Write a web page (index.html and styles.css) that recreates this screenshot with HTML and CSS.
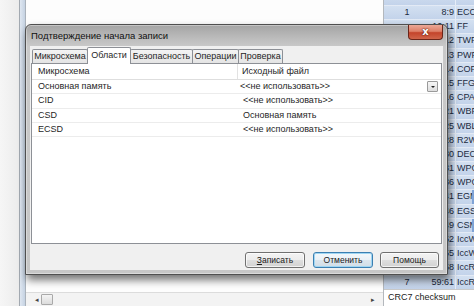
FILE: index.html
```html
<!DOCTYPE html>
<html lang="ru">
<head>
<meta charset="utf-8">
<title>Подтверждение начала записи</title>
<link rel="stylesheet" href="styles.css">
</head>
<body>
<div class="app">
  <div class="side"></div>
  <div class="split"></div>
  <div class="main">
    <div class="canvas"></div>
    <div class="hscroll">
      <span class="arrow">◂</span>
      <span class="thumb"></span>
      <span class="spacer"></span>
      <span class="arrow">▸</span>
    </div>
  </div>
  <div class="right">
    <div class="grid">
      <div class="row head"><span class="c1"></span><span class="c2"></span><span class="c3"></span><span class="c4"></span></div>
      <div class="row"><span class="c1">1</span><span class="c2">8:9</span><span class="c3">ECC</span><span class="c4"></span></div>
      <div class="row"><span class="c1"></span><span class="c2">10:11</span><span class="c3">FF</span><span class="c4"></span></div>
      <div class="row"><span class="c1"></span><span class="c2">12</span><span class="c3">TWP</span><span class="c4"></span></div>
      <div class="row"><span class="c1"></span><span class="c2">13</span><span class="c3">PWP</span><span class="c4"></span></div>
      <div class="row"><span class="c1"></span><span class="c2">14</span><span class="c3">COPY</span><span class="c4"></span></div>
      <div class="row"><span class="c1"></span><span class="c2">15</span><span class="c3">FFG</span><span class="c4"></span></div>
      <div class="row"><span class="c1"></span><span class="c2">16</span><span class="c3">CPA</span><span class="c4"></span></div>
      <div class="row"><span class="c1"></span><span class="c2">21</span><span class="c3">WBP</span><span class="c4"></span></div>
      <div class="row"><span class="c1"></span><span class="c2">22:25</span><span class="c3">WBL</span><span class="c4"></span></div>
      <div class="row"><span class="c1"></span><span class="c2">26:28</span><span class="c3">R2W</span><span class="c4"></span></div>
      <div class="row"><span class="c1"></span><span class="c2">29:30</span><span class="c3">DECC</span><span class="c4"></span></div>
      <div class="row"><span class="c1"></span><span class="c2">31</span><span class="c3">WPGE</span><span class="c4"></span></div>
      <div class="row"><span class="c1"></span><span class="c2">32:36</span><span class="c3">WPGS</span><span class="c4"></span></div>
      <div class="row"><span class="c1"></span><span class="c2">37:41</span><span class="c3">EGM</span><span class="c4 mark"></span></div>
      <div class="row"><span class="c1"></span><span class="c2">42:46</span><span class="c3">EGS</span><span class="c4"></span></div>
      <div class="row"><span class="c1"></span><span class="c2">47:49</span><span class="c3">CSM</span><span class="c4 mark"></span></div>
      <div class="row"><span class="c1"></span><span class="c2">50:52</span><span class="c3">IccW</span><span class="c4"></span></div>
      <div class="row"><span class="c1"></span><span class="c2">53:55</span><span class="c3">IccW</span><span class="c4"></span></div>
      <div class="row"><span class="c1"></span><span class="c2">56:58</span><span class="c3">IccR</span><span class="c4"></span></div>
      <div class="row"><span class="c1">7</span><span class="c2">59:61</span><span class="c3">IccR</span><span class="c4"></span></div>
    </div>
    <div class="desc">CRC7 checksum</div>
  </div>
</div>

<div class="dialog">
  <div class="titlebar">
    <span class="title">Подтверждение начала записи</span>
    <span class="close">x</span>
  </div>
  <div class="client">
    <div class="tabs">
      <span class="tab t1">Микросхема</span>
      <span class="tab t2 sel">Области</span>
      <span class="tab t3">Безопасность</span>
      <span class="tab t4">Операции</span>
      <span class="tab t5">Проверка</span>
    </div>
    <div class="panel">
      <div class="lrow lhead"><span class="lc1">Микросхема</span><span class="lc2">Исходный файл</span></div>
      <div class="lrow combo"><span class="lc1">Основная память</span><span class="lc2">&lt;&lt;не использовать&gt;&gt;<span class="drop"></span></span></div>
      <div class="lrow"><span class="lc1">CID</span><span class="lc2">&lt;&lt;не использовать&gt;&gt;</span></div>
      <div class="lrow"><span class="lc1">CSD</span><span class="lc2">Основная память</span></div>
      <div class="lrow"><span class="lc1">ECSD</span><span class="lc2">&lt;&lt;не использовать&gt;&gt;</span></div>
    </div>
    <div class="buttons">
      <span class="btn"><u>З</u>аписать</span>
      <span class="btn focus">Отменить</span>
      <span class="btn">Помощь</span>
    </div>
  </div>
</div>
</body>
</html>
```

FILE: styles.css
```css
html, body {
  margin: 0;
  padding: 0;
}
body {
  width: 474px;
  height: 306px;
  overflow: hidden;
  position: relative;
  font-family: "Liberation Sans", Arial, sans-serif;
  font-size: 9px;
  color: #1f1f1f;
  background: #fff;
}

/* background application */
.app {
  display: flex;
  height: 306px;
}
.side {
  width: 19px;
  background: linear-gradient(90deg, #f6f6f6, #ececec);
  border-right: 1px solid #a2a9b1;
}
.split {
  width: 5px;
  background: linear-gradient(90deg, #dfe7f1, #c5d2e2);
  border-right: 1px solid #aab2bb;
}
.main {
  flex: 1;
  display: flex;
  flex-direction: column;
  background: #fff;
}
.canvas {
  flex: 1;
  background: #fdfdfd;
}
.hscroll {
  height: 13px;
  border-top: 1px solid #dcdcdc;
  background: #f3f3f3;
  display: flex;
  align-items: center;
  padding: 0 8px 0 9px;
  color: #444;
  font-size: 7px;
}
.hscroll .thumb {
  width: 10px;
  height: 9px;
  margin-left: 2px;
  border: 1px solid #a9a9a9;
  border-radius: 1px;
  background: linear-gradient(#f4f4f4, #dcdcdc);
}
.hscroll .spacer {
  flex: 1;
}
.right {
  width: 90px;
  border-left: 1px solid #b4b8bd;
  display: flex;
  flex-direction: column;
  background: #fff;
}
.grid {
  flex: 1;
  overflow: hidden;
  background: #c9d8ec;
}
.row {
  display: grid;
  grid-template-columns: 46px 26px 16px 1fr;
  height: 14.2px;
  line-height: 13px;
  box-sizing: border-box;
  border-bottom: 1px solid #e3eaf5;
  background: linear-gradient(#d3e0f1, #c3d3ea);
  color: #1b2a3d;
  white-space: nowrap;
}
.row.head {
  margin-top: -8.2px;
}
.c1 {
  text-align: center;
}
.c2 {
  text-align: right;
  padding-right: 1px;
  border-right: 1px solid #e6edf7;
}
.c3 {
  padding-left: 1px;
  overflow: visible;
}
.c4.mark {
  background: #7fa3d6;
}
.desc {
  height: 16px;
  border-top: 1px solid #c9c9c9;
  padding-left: 4px;
  line-height: 15px;
  background: #fff;
  color: #222;
}

/* dialog window */
.dialog {
  position: absolute;
  left: 25px;
  top: 24px;
  width: 423px;
  height: 251px;
  box-sizing: border-box;
  border: 1px solid #4f4f4f;
  border-radius: 6px 6px 0 0;
  background: linear-gradient(#a4a4a4 0px, #bdbdbd 14px, #c9c9c9 22px, #c6c6c6 100%);
  box-shadow: 2px 5px 9px rgba(0, 0, 0, 0.55), inset 0 0 0 1px rgba(255, 255, 255, 0.35);
  display: flex;
  flex-direction: column;
  padding: 0 4px 4px 4px;
}
.titlebar {
  height: 21px;
  display: flex;
  align-items: flex-start;
}
.title {
  padding-left: 1px;
  line-height: 21px;
  font-size: 9.5px;
  color: #101010;
}
.close {
  margin-left: auto;
  width: 35px;
  height: 15px;
  box-sizing: border-box;
  border: 1px solid #6a2519;
  border-top: none;
  border-radius: 0 0 4px 4px;
  background: linear-gradient(#eba897 0%, #dd8068 45%, #c4442b 55%, #d0654a 100%);
  color: #fff;
  font-family: "DejaVu Sans", sans-serif;
  font-weight: bold;
  font-size: 10px;
  line-height: 13px;
  text-align: center;
  text-shadow: 0 0 2px #5a1a10, 0 0 1px #5a1a10;
}
.client {
  flex: 1;
  background: #f0f0f0;
  display: flex;
  flex-direction: column;
  padding: 1px 1px 0 1px;
}
.tabs {
  display: flex;
  align-items: flex-end;
  height: 17px;
  margin-bottom: -1px;
  padding-left: 1px;
  position: relative;
  z-index: 1;
}
.tab {
  box-sizing: border-box;
  height: 14px;
  margin-bottom: 1px;
  margin-left: -1px;
  border: 1px solid #8d9096;
  border-bottom: none;
  border-radius: 2px 2px 0 0;
  background: linear-gradient(#f4f4f4, #e4e4e4);
  text-align: center;
  line-height: 12px;
  white-space: nowrap;
}
.tab.t1 { width: 56px; margin-left: 0; }
.tab.t2 { width: 44px; }
.tab.t3 { width: 63px; }
.tab.t4 { width: 47px; }
.tab.t5 { width: 45px; }
.tab.sel {
  height: 17px;
  margin-bottom: 0;
  background: #fff;
  line-height: 14px;
}
.panel {
  height: 181px;
  box-sizing: border-box;
  border: 1px solid #8d9096;
  background: #fff;
  position: relative;
  z-index: 0;
}
.lrow {
  display: flex;
  height: 14.3px;
  box-sizing: border-box;
  border-bottom: 1px solid #ececec;
  line-height: 13px;
  white-space: nowrap;
}
.lrow.lhead {
  height: 16px;
  line-height: 15px;
  border-bottom: 1px solid #dedede;
}
.lc1 {
  width: 205px;
  padding-left: 6px;
  box-sizing: border-box;
}
.lc2 {
  flex: 1;
  padding-left: 6px;
  position: relative;
}
.lhead .lc2 {
  border-left: 1px solid #e2e2e2;
  padding-left: 4px;
}
.combo .lc2 {
  padding-left: 3px;
}
.drop {
  position: absolute;
  right: 3px;
  top: 1px;
  width: 11px;
  height: 11px;
  box-sizing: border-box;
  border: 1px solid #9a9a9a;
  border-radius: 1px;
  background: linear-gradient(#f6f6f6, #dedede);
}
.drop::after {
  content: "";
  position: absolute;
  left: 3px;
  top: 4px;
  border-left: 2px solid transparent;
  border-right: 2px solid transparent;
  border-top: 2px solid #222;
}
.buttons {
  flex: 1;
  display: flex;
  justify-content: flex-end;
  align-items: flex-start;
  padding: 8px 3px 0 0;
  gap: 8px;
}
.btn {
  box-sizing: border-box;
  width: 60px;
  height: 16px;
  border: 1px solid #707070;
  border-radius: 3px;
  background: linear-gradient(#f3f3f3 0%, #ececec 50%, #dedede 51%, #d2d2d2 100%);
  box-shadow: inset 0 0 0 1px rgba(255, 255, 255, 0.7);
  text-align: center;
  line-height: 14px;
  font-size: 8.5px;
  color: #1a1a1a;
}
.btn:last-child {
  width: 59px;
  margin-left: -1px;
}
.btn u {
  text-decoration: underline;
}
.btn.focus {
  border-color: #3c7fb1;
  background: linear-gradient(#f4f8fb 0%, #e9f1f7 50%, #dce6ee 51%, #d2dde6 100%);
  box-shadow: inset 0 0 0 1px #9fd6f3;
}
```
